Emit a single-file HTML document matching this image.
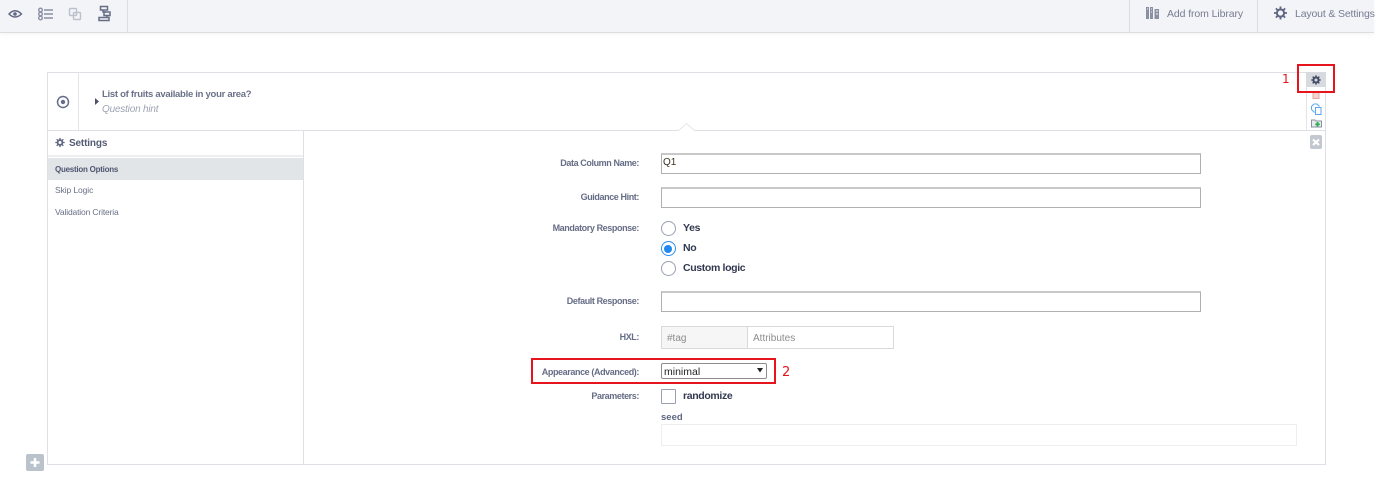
<!DOCTYPE html>
<html><head><meta charset="utf-8"><style>
html,body{margin:0;padding:0;background:#fff;width:1380px;height:478px;overflow:hidden;font-family:"Liberation Sans",sans-serif}
.a{position:absolute}
.t{position:absolute;white-space:nowrap;line-height:14px}
.lb{position:absolute;right:741px;white-space:nowrap;font-size:9px;letter-spacing:-.4px;font-weight:bold;color:#666d86;line-height:12px}
.in{position:absolute;box-sizing:border-box;background:#fff;border:1px solid #b0b0b0;border-top:2px solid #c8c8c8;left:661px;width:540px;height:21px}
.r{position:absolute;left:661px;width:13px;height:13px;border:1px solid #9a9fb4;border-radius:50%;background:#fff}
.o{position:absolute;left:683px;font-size:10.5px;letter-spacing:-.35px;font-weight:bold;color:#32384f;line-height:14px;white-space:nowrap}
</style></head><body>
<div class="a" style="left:0;top:0;width:1374px;height:32px;background:#f3f4f7;border-bottom:1px solid #dcdde1;box-shadow:0 2px 4px rgba(0,0,0,.04)"></div>
<div class="a" style="left:127px;top:0;width:1px;height:32px;background:#dcdde1"></div>
<div class="a" style="left:1129px;top:0;width:1px;height:32px;background:#dcdde1"></div>
<div class="a" style="left:1257px;top:0;width:1px;height:32px;background:#dcdde1"></div>
<svg class="a" style="left:0;top:0" width="130" height="32" fill="none" stroke-width="1.4">
<path d="M9 14 Q15 7.500 21.500 14 Q15 20 9 14Z" stroke="#5f6782"/><circle cx="15" cy="14" r="1.800" fill="#5f6782"/>
<g stroke="#8a90a3"><circle cx="40.500" cy="10" r="1.800"/><circle cx="40.500" cy="14" r="1.800"/><circle cx="40.500" cy="18" r="1.800"/><path d="M44 10h9M44 14h9M44 18h9" stroke-width="1.500"/></g>
<g stroke="#bcc1cd"><rect x="69.500" y="8.500" width="7" height="7" rx="1"/><rect x="73.500" y="12.500" width="7" height="7" rx="1"/></g>
<g stroke="#666d85" stroke-width="1.500"><rect x="100.500" y="6.500" width="7" height="3.500"/><path d="M103 10v2h3"/><rect x="104" y="12" width="6" height="3.500"/><path d="M107 15.500v2"/><rect x="99" y="17.500" width="10" height="3"/></g>
</svg>
<svg class="a" style="left:1145px;top:6px" width="15" height="14" fill="#8a8fa2"><path d="M1 1h3v12H1zM5 1h3v12H5zM9.500 3h4.500v10H9.500z"/><path d="M2 3h1M6 3h1M11 5h2M6 6h1M11 8h2" stroke="#f3f4f7"/></svg>
<div class="t" style="left:1167px;top:7px;font-size:10.500px;letter-spacing:-.1px;color:#777d92">Add from Library</div>
<svg class="a" style="left:1273px;top:6px" width="15" height="15" viewBox="0 0 15 15" fill="none"><circle cx="7.500" cy="7" r="3.600" stroke="#5f6782" stroke-width="2"/><path d="M7.500 .5v2.500M7.500 11v2.500M1 7h2.500M11.500 7H14M2.900 2.400l1.800 1.800M10.300 9.800l1.800 1.800M12.100 2.400l-1.800 1.800M4.700 9.800l-1.800 1.800" stroke="#5f6782" stroke-width="1.800"/></svg>
<div class="t" style="left:1295px;top:7px;font-size:10.500px;letter-spacing:-.15px;color:#777d92">Layout &amp; Settings</div>

<div class="a" style="left:47px;top:72px;width:1279px;height:393px;box-sizing:border-box;border:1px solid #dfe0e5;border-bottom:1px solid #dfe0e5"></div>
<div class="a" style="left:47px;top:130px;width:1279px;height:1px;background:#dfe0e5"></div>
<div class="a" style="left:78px;top:72px;width:1px;height:58px;background:#e3e4e8"></div>
<div class="a" style="left:303px;top:130px;width:1px;height:334px;background:#dfe0e5"></div>
<svg class="a" style="left:677px;top:122px" width="20" height="10"><path d="M1 9 L9.500 1.500 L18 9" fill="#fff" stroke="#e6e7ea"/></svg>
<svg class="a" style="left:56px;top:95px" width="14" height="14" fill="none"><circle cx="7" cy="7" r="5.500" stroke="#666d8a" stroke-width="1.500"/><circle cx="7" cy="7" r="2.200" fill="#666d8a"/></svg>
<svg class="a" style="left:94px;top:97px" width="6" height="9"><path d="M1 1l4 3.500L1 8z" fill="#4f5268"/></svg>
<div class="t" style="left:102px;top:88px;font-size:9.500px;letter-spacing:-.28px;font-weight:bold;color:#6b7289">List of fruits available in your area?</div>
<div class="t" style="left:102px;top:103px;font-size:10px;letter-spacing:-.2px;font-style:italic;color:#9da4b4">Question hint</div>

<svg class="a" style="left:55px;top:137px" width="10" height="11" viewBox="0 0 15 15" fill="none"><circle cx="7.500" cy="7.500" r="3.600" stroke="#5f6782" stroke-width="2.600"/><path d="M7.500 .5v3M7.500 11.500v3M.5 7.500h3M11.500 7.500h3M2.500 2.500l2 2M10.500 10.500l2 2M12.500 2.500l-2 2M4.500 10.500l-2 2" stroke="#5f6782" stroke-width="2"/></svg>
<div class="t" style="left:69px;top:137px;font-size:10px;letter-spacing:-.15px;font-weight:bold;color:#555c74">Settings</div>
<div class="a" style="left:48px;top:155px;width:255px;height:2px;background:#eceef0"></div>
<div class="a" style="left:48px;top:158px;width:255px;height:22px;background:#e2e5e8"></div>
<div class="t" style="left:55px;top:163px;font-size:8px;letter-spacing:-.25px;font-weight:bold;color:#4f5670">Question Options</div>
<div class="t" style="left:55px;top:183px;font-size:8.500px;letter-spacing:-.1px;color:#6a7086">Skip Logic</div>
<div class="t" style="left:55px;top:205px;font-size:8.500px;letter-spacing:-.15px;color:#6a7086">Validation Criteria</div>

<div class="a" style="left:1306px;top:72px;width:1px;height:58px;background:#e3e4e8"></div>
<div class="a" style="left:1306px;top:72px;width:20px;height:15px;background:#d7dbe0"></div>
<svg class="a" style="left:1311px;top:75px" width="10" height="10" viewBox="0 0 15 15" fill="none"><circle cx="7.500" cy="7.500" r="3.800" stroke="#454c66" stroke-width="3"/><path d="M7.500 .5v3M7.500 11.500v3M.5 7.500h3M11.500 7.500h3M2.500 2.500l2 2M10.500 10.500l2 2M12.500 2.500l-2 2M4.500 10.500l-2 2" stroke="#454c66" stroke-width="2.200"/></svg>
<svg class="a" style="left:1311px;top:90px" width="10" height="9" fill="none"><rect x="2" y="2.500" width="6" height="6" fill="#f4d2cf" stroke="#e0a8a0"/><path d="M1 1.500h8" stroke="#e0a8a0"/></svg>
<svg class="a" style="left:1311px;top:103px" width="11" height="12" fill="none" stroke="#5aa5ef"><path d="M.5 6.500V3.500L3 1h3l2.500 2.500"/><path d="M.5 6.500L3.500 9.500"/><path d="M4.500 4.500h5.500v7H4.500z" fill="#fff"/></svg>
<svg class="a" style="left:1311px;top:118px" width="11" height="10"><path d="M.5 2h3.500l1 1h5.500v6H.5z" fill="#e9ebee" stroke="#8a90a3"/><path d="M6.500 4v4.500M4.300 6.300h4.500" stroke="#2db04f" stroke-width="1.800"/></svg>
<div class="a" style="left:1310px;top:135px;width:12px;height:14px;background:#c3c7cf;border-radius:2px"></div>
<svg class="a" style="left:1310px;top:135px" width="12" height="14"><path d="M3 4.500l6 5.500M9 4.500L3 10" stroke="#fff" stroke-width="2.200"/></svg>

<div class="lb" style="top:157px">Data Column Name:</div>
<div class="in" style="top:153px"></div>
<div class="t" style="left:663px;top:156px;font-size:10px;color:#3b3320">Q1</div>
<div class="lb" style="top:191px">Guidance Hint:</div>
<div class="in" style="top:187px"></div>
<div class="lb" style="top:222px">Mandatory Response:</div>
<div class="r" style="top:221px"></div><div class="o" style="top:221px">Yes</div>
<div class="r" style="top:241px;border-color:#2d8ff0"></div><div class="a" style="left:664px;top:245px;width:8px;height:8px;border-radius:50%;background:#2189ed"></div><div class="o" style="top:241px">No</div>
<div class="r" style="top:261px"></div><div class="o" style="top:261px">Custom logic</div>
<div class="lb" style="top:295px">Default Response:</div>
<div class="in" style="top:291px"></div>

<div class="lb" style="top:331px">HXL:</div>
<div class="a" style="left:661px;top:326px;width:233px;height:23px;box-sizing:border-box;border:1px solid #d9d9d9;background:#fff"></div>
<div class="a" style="left:662px;top:327px;width:85px;height:21px;background:#f6f6f6;border-right:1px solid #d9d9d9"></div>
<div class="t" style="left:667px;top:332px;font-size:10px;color:#8c8c8c">#tag</div>
<div class="t" style="left:753px;top:332px;font-size:10px;color:#8c8c8c">Attributes</div>

<div class="a" style="left:531px;top:358px;width:245px;height:26px;box-sizing:border-box;border:2px solid #e5141d"></div>
<div class="lb" style="top:366px">Appearance (Advanced):</div>
<div class="a" style="left:661px;top:363px;width:106px;height:16px;box-sizing:border-box;border:1px solid #8d8d8d;border-radius:2px;background:#fff"></div>
<div class="t" style="left:664px;top:365px;font-size:10.500px;color:#222">minimal</div>
<svg class="a" style="left:756px;top:367px" width="8" height="6"><path d="M1 1h6L4 5.500z" fill="#222"/></svg>
<div class="t" style="left:782px;top:366px;font-size:13px;color:#e5141d;font-family:'DejaVu Sans',sans-serif">2</div>
<div class="t" style="left:1282px;top:72px;font-size:12px;color:#e5141d;font-family:'DejaVu Sans',sans-serif">1</div>
<div class="a" style="left:1297px;top:64px;width:38px;height:29px;box-sizing:border-box;border:2px solid #e5141d"></div>

<div class="lb" style="top:390px">Parameters:</div>
<div class="a" style="left:661px;top:389px;width:13px;height:13px;border:1px solid #9a9fb4;border-radius:1px;background:#fff"></div>
<div class="o" style="top:389px">randomize</div>
<div class="t" style="left:661px;top:411px;font-size:9.500px;font-weight:bold;color:#5f6782">seed</div>
<div class="a" style="left:661px;top:424px;width:636px;height:22px;box-sizing:border-box;border:1px solid #eeeeee;background:#fff"></div>

<div class="a" style="left:26px;top:454px;width:18px;height:17px;background:#bac2cc;border-radius:2px"></div>
<svg class="a" style="left:26px;top:454px" width="18" height="17"><path d="M9 4v9M4.500 8.500h9" stroke="#fff" stroke-width="2.500"/></svg>
</body></html>
